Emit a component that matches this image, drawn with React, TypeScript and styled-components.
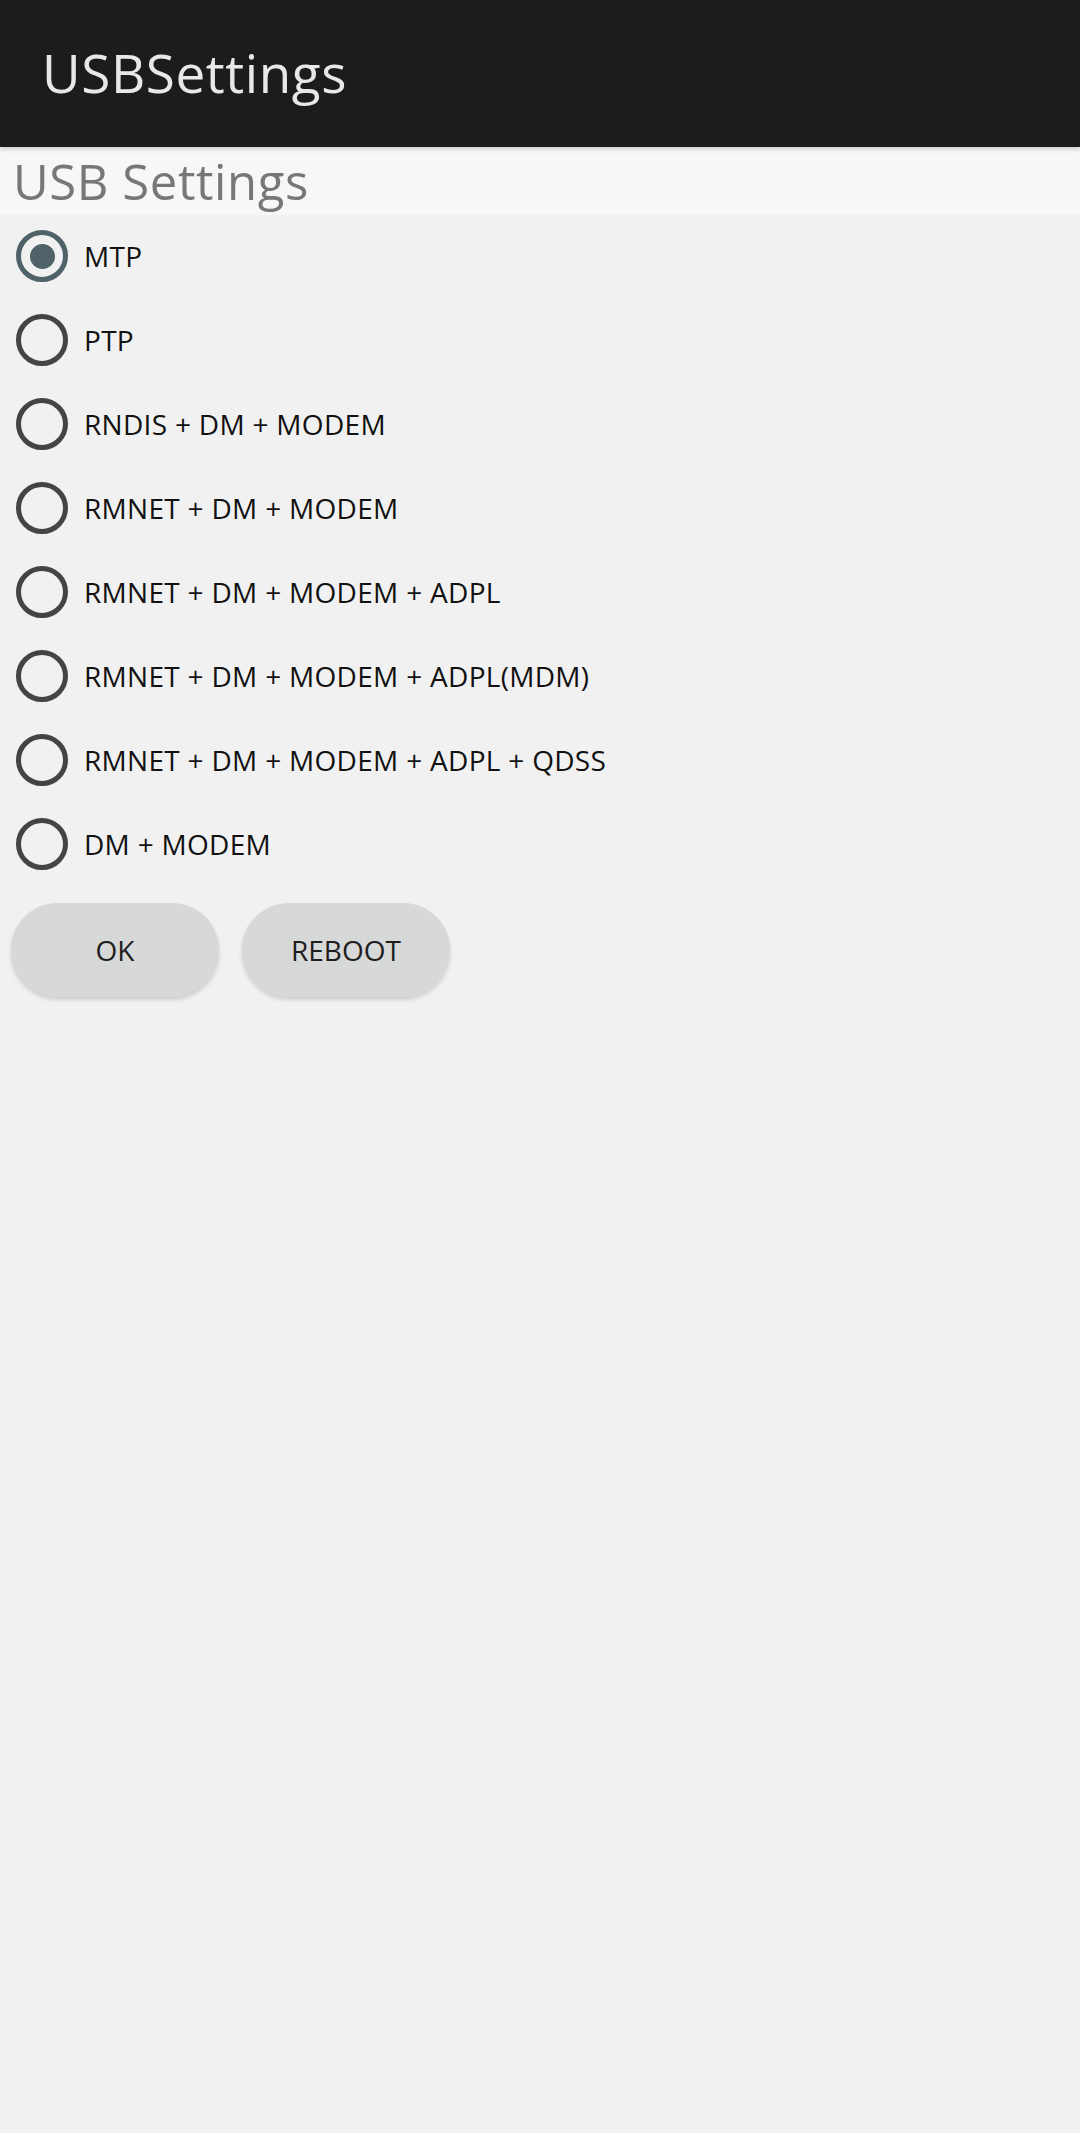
import React, { useState } from "react";
import styled, { createGlobalStyle } from "styled-components";

const GlobalStyle = createGlobalStyle`
  html, body {
    margin: 0;
    padding: 0;
    background: #f1f1f1;
  }
  body {
    font-family: "Open Sans", "Noto Sans", Roboto, sans-serif;
  }
  * {
    box-sizing: border-box;
  }
`;

const Screen = styled.div`
  width: 1080px;
  min-height: 2133px;
  background: #f1f1f1;
  display: flex;
  flex-direction: column;
`;

const ActionBar = styled.header`
  height: 147px;
  background: #1b1c1c;
  display: flex;
  align-items: center;
  padding-left: 42px;
  position: relative;
  z-index: 1;
  box-shadow: 0 2px 5px rgba(0, 0, 0, 0.18);
`;

const AppTitle = styled.h1`
  margin: 0;
  font-family: "Open Sans", "Noto Sans", sans-serif;
  font-weight: 400;
  font-size: 53px;
  letter-spacing: 0.6px;
  color: #e8e8e8;
  padding-bottom: 2px;
`;

const SectionHeader = styled.div`
  height: 68px;
  background: #f7f7f7;
  display: flex;
  align-items: center;
  padding-left: 13px;
`;

const SectionTitle = styled.h2`
  margin: 0;
  font-weight: 400;
  font-size: 49px;
  color: #777777;
  letter-spacing: 0.6px;
`;

const OptionList = styled.div`
  display: flex;
  flex-direction: column;
  margin-top: -1px;
`;

const OptionRow = styled.label`
  height: 84px;
  display: flex;
  align-items: center;
  padding-left: 16px;
  cursor: pointer;
`;

const RadioCircle = styled.span<{ checked: boolean }>`
  width: 52px;
  height: 52px;
  border-radius: 50%;
  border: 5px solid ${(p) => (p.checked ? "#4f6267" : "#444444")};
  display: flex;
  align-items: center;
  justify-content: center;
  flex-shrink: 0;

  &::after {
    content: "";
    width: 25px;
    height: 25px;
    border-radius: 50%;
    background: #4f6267;
    display: ${(p) => (p.checked ? "block" : "none")};
  }
`;

const OptionText = styled.span`
  margin-left: 16px;
  font-size: 28px;
  color: #111111;
  letter-spacing: 0.3px;
`;

const ButtonRow = styled.div`
  display: flex;
  gap: 23px;
  padding: 17px 0 0 11px;
`;

const PillButton = styled.button`
  width: 208px;
  height: 94px;
  border: none;
  border-radius: 47px;
  background: #d7d8d8;
  box-shadow: 0 3px 4px rgba(0, 0, 0, 0.14);
  font-family: "Open Sans", "Noto Sans", sans-serif;
  font-size: 28px;
  color: #1e1e1e;
  cursor: pointer;
`;

const options = [
  "MTP",
  "PTP",
  "RNDIS + DM + MODEM",
  "RMNET + DM + MODEM",
  "RMNET + DM + MODEM + ADPL",
  "RMNET + DM + MODEM + ADPL(MDM)",
  "RMNET + DM + MODEM + ADPL + QDSS",
  "DM + MODEM",
];

export default function App() {
  const [selected, setSelected] = useState(0);

  return (
    <>
      <GlobalStyle />
      <Screen>
        <ActionBar>
          <AppTitle>USBSettings</AppTitle>
        </ActionBar>
        <SectionHeader>
          <SectionTitle>USB Settings</SectionTitle>
        </SectionHeader>
        <OptionList>
          {options.map((opt, i) => (
            <OptionRow key={opt} onClick={() => setSelected(i)}>
              <RadioCircle checked={selected === i} />
              <OptionText>{opt}</OptionText>
            </OptionRow>
          ))}
        </OptionList>
        <ButtonRow>
          <PillButton>OK</PillButton>
          <PillButton>REBOOT</PillButton>
        </ButtonRow>
      </Screen>
    </>
  );
}
